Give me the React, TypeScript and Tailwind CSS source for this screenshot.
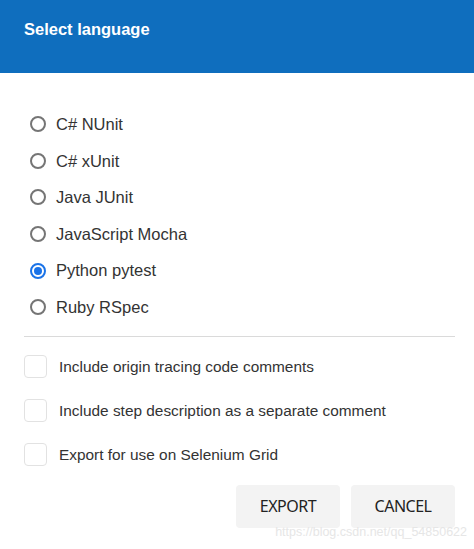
export default function App() {
  const langs = [
    "C# NUnit",
    "C# xUnit",
    "Java JUnit",
    "JavaScript Mocha",
    "Python pytest",
    "Ruby RSpec",
  ];
  const opts = [
    "Include origin tracing code comments",
    "Include step description as a separate comment",
    "Export for use on Selenium Grid",
  ];
  return (
    <div className="w-[474px] h-[549px] bg-white relative overflow-hidden font-['Liberation_Sans',Arial,sans-serif]">
      <div className="h-[73px] bg-[#0f6ebe] px-6 pt-[19px]">
        <h1 className="text-white font-bold text-[16.5px] leading-5">Select language</h1>
      </div>
      <div className="px-6 pt-[33px]">
        <div className="flex flex-col">
          {langs.map((l) => {
            const on = l === "Python pytest";
            return (
              <div key={l} className="flex items-center h-[36.6px]">
                <span
                  className={
                    "ml-[6px] w-4 h-4 rounded-full border-2 flex items-center justify-center " +
                    (on ? "border-[#1a73e8]" : "border-[#757575]")
                  }
                >
                  {on && <span className="w-2 h-2 rounded-full bg-[#1a73e8]" />}
                </span>
                <span className="ml-[10px] text-[16.5px] text-[#333]">{l}</span>
              </div>
            );
          })}
        </div>
        <div className="mt-[10px] h-px bg-[#dadada] mr-[-5px]" />
        <div className="flex flex-col pt-[8px]">
          {opts.map((o) => (
            <div key={o} className="flex items-center h-[44px]">
              <span className="w-[23px] h-[23px] rounded border border-[#e2e2e2]" />
              <span className="ml-[12px] text-[15.4px] text-[#333]">{o}</span>
            </div>
          ))}
        </div>
        <div className="flex justify-end gap-[11px] mt-[8px] mr-[-5px]">
          <button className="w-[104px] h-[43px] rounded bg-[#f3f3f3] text-[16px] text-[#222] font-['Noto_Sans',sans-serif] tracking-[-0.5px]">
            EXPORT
          </button>
          <button className="w-[104px] h-[43px] rounded bg-[#f3f3f3] text-[16px] text-[#222] font-['Noto_Sans',sans-serif] tracking-[-0.5px]">
            CANCEL
          </button>
        </div>
      </div>
      <div className="absolute right-[7px] bottom-[7px] text-[12.5px] text-[#e6e6e6] font-['Liberation_Sans',sans-serif]">
        https://blog.csdn.net/qq_54850622
      </div>
    </div>
  );
}
